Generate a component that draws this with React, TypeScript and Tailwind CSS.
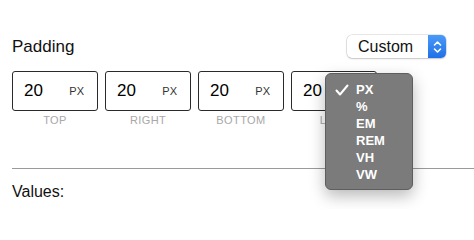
import React from 'react'

/** 单个尺寸输入框 */
function SizeBox({ value, unit, label }: { value: string; unit: string; label: string }) {
  return (
    <div className="flex w-[86px] flex-col items-center">
      <div className="flex h-10 w-full items-center justify-between rounded-[3px] border-[1.5px] border-[#2a2a2a] pr-[13px] pl-[11px]">
        <span className="text-[17px] text-black">{value}</span>
        <span className="text-[11px] text-[#333]">{unit}</span>
      </div>
      <span className="mt-[3px] text-[11px] leading-[13px] tracking-[0.4px] text-[#a8a8a8]">{label}</span>
    </div>
  )
}

const units = ['PX', '%', 'EM', 'REM', 'VH', 'VW']

export default function App() {
  return (
    <div className="relative h-[209px] w-[474px] overflow-hidden bg-white pt-[35px] pl-3 font-['Liberation_Sans',Arial,sans-serif]">
      {/* 标题行 */}
      <div className="flex h-[23px] items-center justify-between pr-7">
        <span className="text-[17px] text-[#111]">Padding</span>
        <div className="flex h-[23px] w-[99px] items-stretch overflow-hidden rounded-[5px] bg-white shadow-[0_0_0_0.5px_rgba(0,0,0,0.18),0_1px_2px_rgba(0,0,0,0.15)]">
          <span className="flex flex-1 items-center pl-[11px] text-[16px] text-[#111]">Custom</span>
          <span className="flex w-[18px] items-center justify-center bg-gradient-to-b from-[#4a9af8] to-[#1f6fe8]">
            <svg width="9" height="14" viewBox="0 0 9 14" fill="none" stroke="white" strokeWidth="1.6" strokeLinecap="round" strokeLinejoin="round">
              <path d="M1.5 5 L4.5 2 L7.5 5" />
              <path d="M1.5 9 L4.5 12 L7.5 9" />
            </svg>
          </span>
        </div>
      </div>

      {/* 四个输入框 */}
      <div className="mt-[13px] flex gap-[7px]">
        <SizeBox value="20" unit="PX" label="TOP" />
        <SizeBox value="20" unit="PX" label="RIGHT" />
        <SizeBox value="20" unit="PX" label="BOTTOM" />
        <SizeBox value="20" unit="PX" label="LEFT" />
      </div>

      <div className="mt-[41px] border-t border-[#9a9a9a]" />
      <div className="mt-[14px] text-[16px] leading-[18px] text-[#111]">Values:</div>

      {/* 单位下拉菜单 */}
      <div className="absolute top-[73px] left-[325px] flex h-[117px] w-[88px] flex-col rounded-[6px] border border-[#5e5e5e] bg-[#7b7b7b] pt-[7px] shadow-[0_6px_16px_rgba(0,0,0,0.28)]">
        {units.map((u, i) => (
          <div key={u} className="flex h-[17px] items-center">
            <span className="flex w-[30px] justify-center pl-[2px]">
              {i === 0 && (
                <svg width="14" height="12" viewBox="0 0 14 12" fill="none" stroke="white" strokeWidth="2" strokeLinecap="round" strokeLinejoin="round">
                  <path d="M1.5 6.5 L5 10.5 L12.5 1.5" />
                </svg>
              )}
            </span>
            <span className="text-[13px] font-bold text-white">{u}</span>
          </div>
        ))}
      </div>
    </div>
  )
}
